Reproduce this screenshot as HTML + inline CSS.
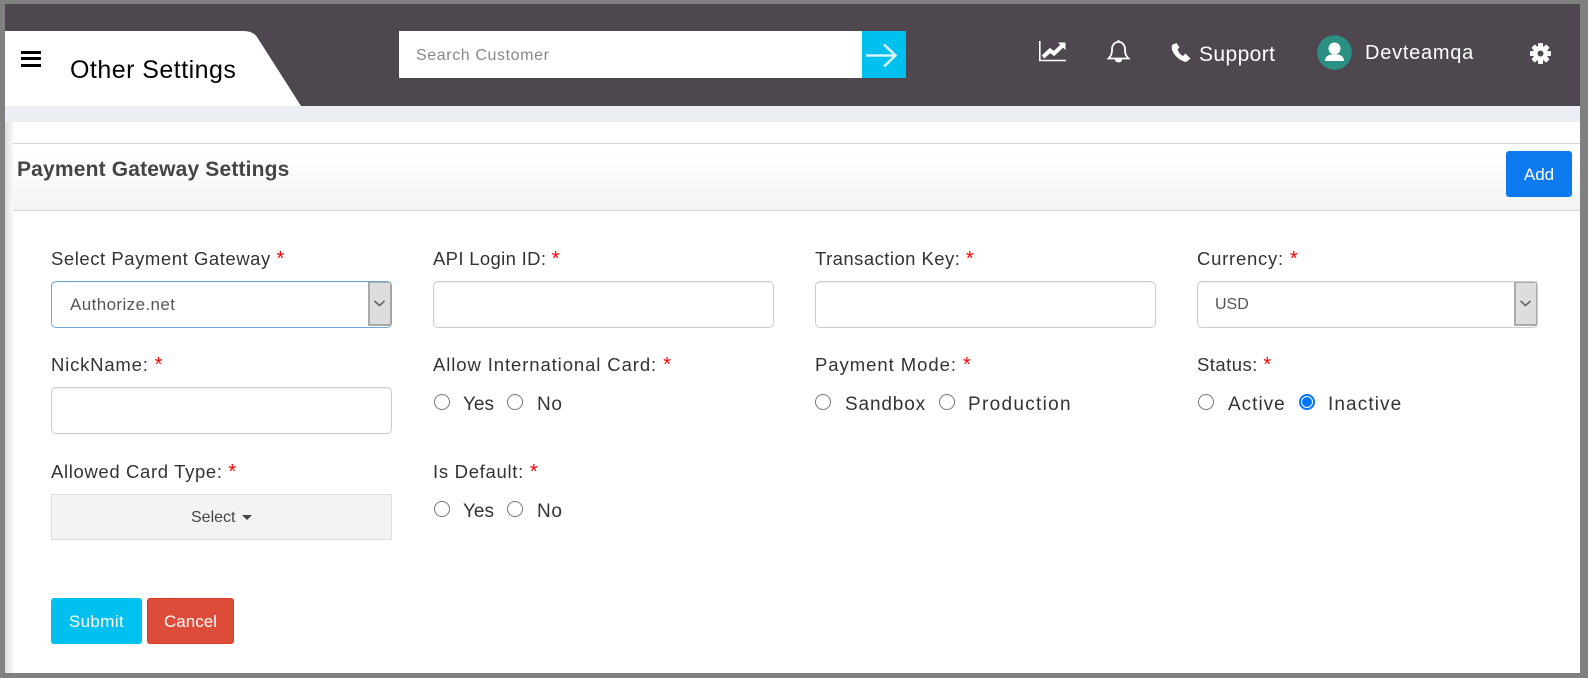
<!DOCTYPE html>
<html><head><meta charset="utf-8"><style>
html,body{margin:0;padding:0}
body{width:1588px;height:678px;position:relative;overflow:hidden;background:#808080;font-family:"Liberation Sans",sans-serif}
.a{position:absolute}
.t{position:absolute;white-space:nowrap;line-height:20px;color:#333}
.l{font-size:18.5px;color:#333}
.l b{color:#f00;font-weight:400;font-size:20px;line-height:18px}
.o{font-size:19px}
.in{position:absolute;box-sizing:border-box;background:#fff;border:1px solid #ccc;border-radius:5px;width:341px;height:47px;box-shadow:inset 0 1px 1px rgba(0,0,0,.07)}
.r{position:absolute;box-sizing:border-box;width:16px;height:16px;border-radius:50%;border:1px solid #767676;background:#fff}
.arr{position:absolute;box-sizing:border-box;width:23px;height:44px;background:#ddd;border:2px solid #aaa;border-top-width:1px;border-right-width:1px}
</style></head><body>
<div class="a" style="left:5px;top:4px;width:1575px;height:669px;background:#fff"></div>
<div class="a" style="left:5px;top:4px;width:1575px;height:102px;background:#4e4750"></div>
<div class="a" style="left:5px;top:106px;width:1575px;height:16px;background:#ebeef2"></div>
<div class="a" style="left:5px;top:122px;width:10px;height:551px;background:linear-gradient(90deg,#ddd,#fff)"></div>
<svg class="a" style="left:5px;top:31px" width="300" height="75"><path d="M0 0H238Q248 0 252 6L296 75H0Z" fill="#fff"/></svg>
<div class="a" style="left:21px;top:51px;width:20px;height:3px;background:#000"></div>
<div class="a" style="left:21px;top:57px;width:20px;height:3px;background:#000"></div>
<div class="a" style="left:21px;top:64px;width:20px;height:3px;background:#000"></div>
<div class="t" style="left:70px;top:58px;font-size:25px;letter-spacing:.47px;color:#000;line-height:24px">Other Settings</div>
<div class="a" style="left:399px;top:31px;width:463px;height:47px;background:#fff"></div>
<div class="t" style="left:416px;top:46px;font-size:16px;letter-spacing:.6px;color:#888">Search Customer</div>
<div class="a" style="left:862px;top:31px;width:44px;height:47px;background:#00c0ef"></div>
<svg class="a" style="left:862px;top:31px" width="44" height="47" fill="none" stroke="#d8f4fc" stroke-width="2.500"><path d="M4 24.500H33M22 13.500L33.500 24.500L22 35.500"/></svg>
<svg class="a" style="left:1039px;top:41px" width="28" height="21" fill="none" stroke="#fff"><path d="M.8 0V19.500H27" stroke-width="1.600"/><path d="M4 16L11 9.500L15 12.500L24 4" stroke-width="4"/><path d="M19 1.500H26.500V9Z" fill="#fff" stroke="none"/></svg>
<svg class="a" style="left:1107px;top:39px" width="24" height="24" fill="none" stroke="#fff" stroke-width="1.800"><path d="M11.500 1V3M11.500 3C7 3 5 7 5 10C5 15 4 17 1.500 19.500H21.500C19 17 18 15 18 10C18 7 16 3 11.500 3Z"/><path d="M9 21C9.500 23 13.500 23 14 21Z" fill="#fff"/></svg>
<svg class="a" style="left:1171px;top:43px" width="20" height="19"><path d="M5.500 0L1 2C-1 7.500 6 17 15 19L19.500 15.500L14.500 10.500L12 13C9.500 12 7.500 9 6.500 6.500L8.500 4.500Z" fill="#fff"/></svg>
<div class="t" style="left:1199px;top:45px;font-size:21px;letter-spacing:.4px;color:#fff">Support</div>
<svg class="a" style="left:1317px;top:35px" width="35" height="35"><circle cx="17.500" cy="17.500" r="17.300" fill="#2a9083"/><circle cx="17.500" cy="13.500" r="6" fill="#fff"/><path d="M8 26C8 21 12 20 14 19.500H21C23 20 27 21 27 26Z" fill="#fff"/></svg>
<div class="t" style="left:1365px;top:43px;font-size:20px;color:#fff;letter-spacing:.75px">Devteamqa</div>
<svg class="a" style="left:1530px;top:43px" width="21" height="21"><g fill="#fff"><rect x="8" y="0" width="5" height="21" rx="1"/><rect x="8" y="0" width="5" height="21" rx="1" transform="rotate(45 10.500 10.500)"/><rect x="8" y="0" width="5" height="21" rx="1" transform="rotate(90 10.500 10.500)"/><rect x="8" y="0" width="5" height="21" rx="1" transform="rotate(135 10.500 10.500)"/><circle cx="10.500" cy="10.500" r="7.500"/></g><circle cx="10.500" cy="10.500" r="3" fill="#4e4750"/></svg>

<div class="a" style="left:13px;top:143px;width:1567px;height:68px;box-sizing:border-box;border-top:1px solid #d5d5d5;border-bottom:1px solid #d5d5d5;background:linear-gradient(#fff 15%,#f3f3f3)"></div>
<div class="t" style="left:17px;top:160px;font-size:21px;letter-spacing:.17px;font-weight:700;color:#444">Payment Gateway Settings</div>
<div class="a" style="left:1506px;top:151px;width:66px;height:46px;background:#0d7aef;border-radius:3px;color:#fff;font-size:17px;line-height:48px;text-align:center">Add</div>

<div class="t l" style="left:51px;top:249px;letter-spacing:.55px">Select Payment Gateway <b>*</b></div>
<div class="t l" style="left:433px;top:249px;letter-spacing:.33px">API Login ID: <b>*</b></div>
<div class="t l" style="left:815px;top:249px;letter-spacing:.45px">Transaction Key: <b>*</b></div>
<div class="t l" style="left:1197px;top:249px;letter-spacing:.75px">Currency: <b>*</b></div>

<div class="in" style="left:51px;top:281px;border-color:#6fa8dc"></div>
<div class="t" style="left:70px;top:295px;font-size:17px;letter-spacing:.4px;color:#555">Authorize.net</div>
<div class="arr" style="left:368px;top:282px"></div>
<svg class="a" style="left:368px;top:283px" width="23" height="43" fill="none" stroke="#666" stroke-width="1.600"><path d="M6.500 18L11.500 22.500L16.500 18"/></svg>
<div class="in" style="left:433px;top:281px"></div>
<div class="in" style="left:815px;top:281px"></div>
<div class="in" style="left:1197px;top:281px"></div>
<div class="t" style="left:1215px;top:295px;font-size:16px;color:#555">USD</div>
<div class="arr" style="left:1514px;top:282px"></div>
<svg class="a" style="left:1514px;top:283px" width="23" height="43" fill="none" stroke="#666" stroke-width="1.600"><path d="M6.500 18L11.500 22.500L16.500 18"/></svg>

<div class="t l" style="left:51px;top:355px;letter-spacing:.8px">NickName: <b>*</b></div>
<div class="t l" style="left:433px;top:355px;letter-spacing:.9px">Allow International Card: <b>*</b></div>
<div class="t l" style="left:815px;top:355px;letter-spacing:.95px">Payment Mode: <b>*</b></div>
<div class="t l" style="left:1197px;top:355px;letter-spacing:.45px">Status: <b>*</b></div>
<div class="in" style="left:51px;top:387px"></div>

<div class="r" style="left:434px;top:394px"></div><div class="t o" style="left:463px;top:395px">Yes</div>
<div class="r" style="left:507px;top:394px"></div><div class="t o" style="left:537px;top:395px;letter-spacing:.7px">No</div>
<div class="r" style="left:815px;top:394px"></div><div class="t o" style="left:845px;top:395px;letter-spacing:.85px">Sandbox</div>
<div class="r" style="left:939px;top:394px"></div><div class="t o" style="left:968px;top:395px;letter-spacing:1.300px">Production</div>
<div class="r" style="left:1198px;top:394px"></div><div class="t o" style="left:1228px;top:395px;letter-spacing:1px">Active</div>
<div class="r" style="left:1299px;top:394px;border:2px solid #0075ff"></div><div class="a" style="left:1302px;top:397px;width:10px;height:10px;border-radius:50%;background:#0075ff"></div><div class="t o" style="left:1328px;top:395px;letter-spacing:1.100px">Inactive</div>

<div class="t l" style="left:51px;top:462px;letter-spacing:.64px">Allowed Card Type: <b>*</b></div>
<div class="t l" style="left:433px;top:462px;letter-spacing:.7px">Is Default: <b>*</b></div>
<div class="a" style="left:51px;top:494px;width:341px;height:46px;box-sizing:border-box;background:#f3f3f3;border:1px solid #ddd"></div>
<div class="t" style="left:191px;top:508px;font-size:16px;color:#444">Select</div>
<svg class="a" style="left:242px;top:515px" width="11" height="6"><path d="M0 0H10L5 5Z" fill="#444"/></svg>
<div class="r" style="left:434px;top:501px"></div><div class="t o" style="left:463px;top:502px">Yes</div>
<div class="r" style="left:507px;top:501px"></div><div class="t o" style="left:537px;top:502px;letter-spacing:.7px">No</div>

<div class="a" style="left:51px;top:598px;width:91px;height:46px;background:#00c0ef;border-radius:3px;color:#fff;font-size:17px;letter-spacing:.4px;line-height:48px;text-align:center">Submit</div>
<div class="a" style="left:147px;top:598px;width:87px;height:46px;background:#dd4b39;border:1px solid #d73925;box-sizing:border-box;border-radius:3px;color:#fff;font-size:17px;line-height:46px;text-align:center">Cancel</div>
</body></html>
